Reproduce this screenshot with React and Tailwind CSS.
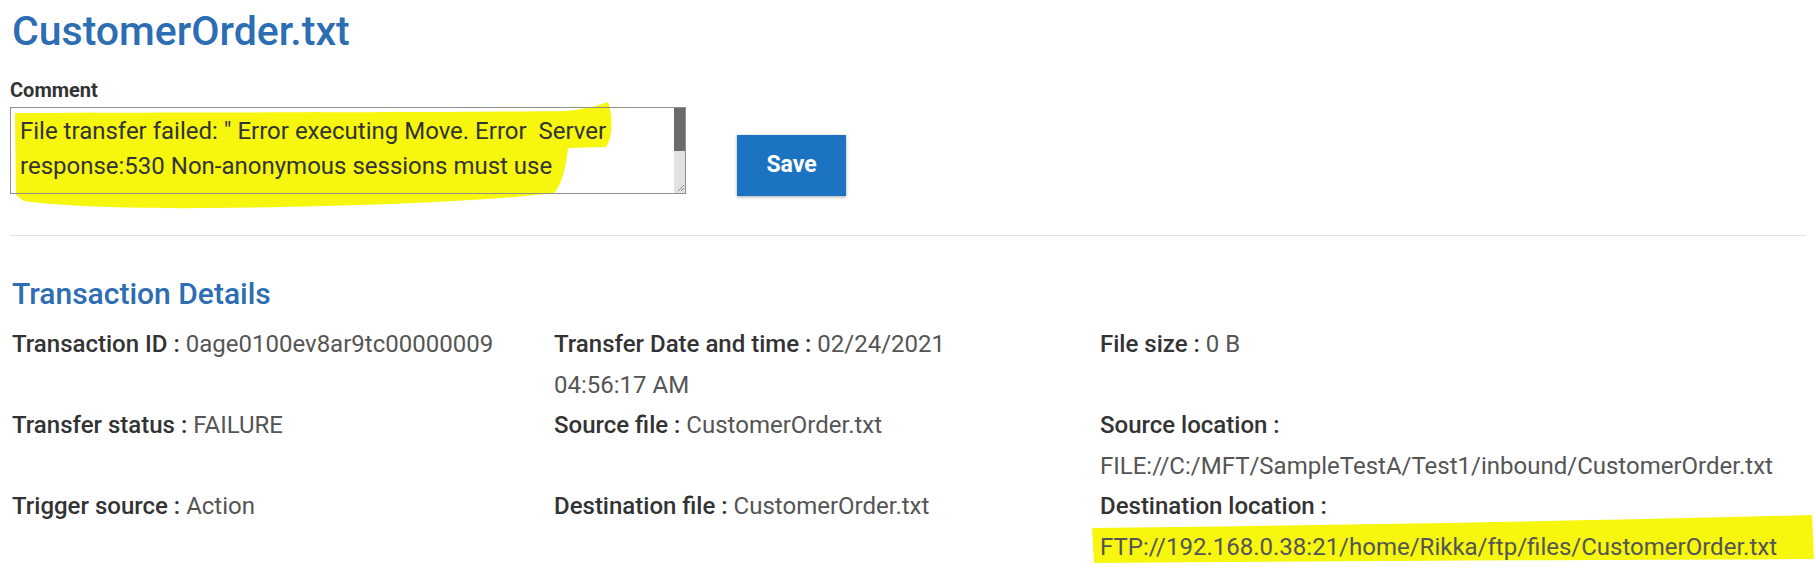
import React from "react";

const rows = [
  [
    { label: "Transaction ID", value: "0age0100ev8ar9tc00000009" },
    { label: "Transfer Date and time", value: "02/24/2021", extra: "04:56:17 AM" },
    { label: "File size", value: "0 B" },
  ],
  [
    { label: "Transfer status", value: "FAILURE" },
    { label: "Source file", value: "CustomerOrder.txt" },
    { label: "Source location", value: "", extra: "FILE://C:/MFT/SampleTestA/Test1/inbound/CustomerOrder.txt" },
  ],
  [
    { label: "Trigger source", value: "Action" },
    { label: "Destination file", value: "CustomerOrder.txt" },
    {
      label: "Destination location",
      value: "",
      extra: "FTP://192.168.0.38:21/home/Rikka/ftp/files/CustomerOrder.txt",
      mark: true,
    },
  ],
];

function Field({ label, value, extra, mark }) {
  return (
    <div className="leading-[40.5px]">
      <div className="whitespace-nowrap">
        <span className="font-medium text-[#333]">{label} :</span>
        {value && <span className="text-[#555]"> {value}</span>}
      </div>
      {extra && (
        <div className="relative whitespace-nowrap text-[#555]">
          {mark && (
            // hand-drawn marker over the destination path
            <svg className="absolute left-[-8px] top-[-12px] h-[50px] w-[722px]" viewBox="0 0 722 50" preserveAspectRatio="none">
              <path d="M0 13 C200 11 500 6 720 0 L722 44 C500 45 250 46 2 48 Z" fill="#f6f60e" />
            </svg>
          )}
          <span className="relative">{extra}</span>
        </div>
      )}
    </div>
  );
}

export default function App() {
  return (
    <div className="min-h-[570px] bg-white px-[10px] pt-[7px] font-['Roboto',sans-serif]">
      <h1 className="pl-[2px] text-[41px] font-medium leading-[48px] text-[#2c6db3]">CustomerOrder.txt</h1>

      <div className="mt-[25px] text-[20px] font-bold leading-[20px] text-[#333]">Comment</div>

      <div className="mt-[7px] flex items-start">
        <div className="relative">
          {/* marker highlight over the comment */}
          <svg className="pointer-events-none absolute left-0 top-0 h-[110px] w-[610px] overflow-visible" viewBox="0 0 610 110">
            <path
              d="M5 6 C150 5 400 6 556 4 C575 2 590 -2 598 -5 C603 8 603 30 596 40 L558 41 C556 58 553 76 544 86 C470 95 330 100 200 101 C110 102 40 98 14 94 L6 88 Z"
              fill="#f6f60e"
            />
          </svg>
          <div className="relative flex h-[87px] w-[676px] border border-[#8f8f8f]">
            <div className="flex-1 pl-[9px] pt-[6px] text-[24px] leading-[35px] text-[#333]">
              <div className="whitespace-nowrap">File transfer failed: " Error executing Move. Error&nbsp; Server</div>
              <div className="whitespace-nowrap">response:530 Non-anonymous sessions must use</div>
            </div>
            <div className="flex w-[11px] flex-col bg-[#e2e2e2]">
              <div className="h-[43px] bg-[#6b6b6b]" />
              <div className="flex-1" />
              <svg className="mb-[1px] ml-auto h-[9px] w-[9px]" viewBox="0 0 9 9">
                <path d="M8 2 L2 8 M8 5 L5 8" stroke="#8a8a8a" strokeWidth="1" />
              </svg>
            </div>
          </div>
        </div>
        <button className="ml-[51px] mt-[28px] h-[61px] w-[109px] bg-[#1b73c1] text-[23px] font-bold text-white shadow-[0_1px_3px_rgba(0,0,0,0.35)]">
          Save
        </button>
      </div>

      <div className="mt-[39px] h-px bg-[#e2e2e2]" />

      <h2 className="mt-[40px] pl-[2px] text-[30px] font-medium leading-[36px] text-[#2c6db3]">Transaction Details</h2>

      <div className="mt-[12px] grid grid-cols-[542px_546px_1fr] pl-[2px] text-[24px]">
        {rows.map((row, i) =>
          row.map((f, j) => <Field key={`${i}-${j}`} {...f} />)
        )}
      </div>
    </div>
  );
}
